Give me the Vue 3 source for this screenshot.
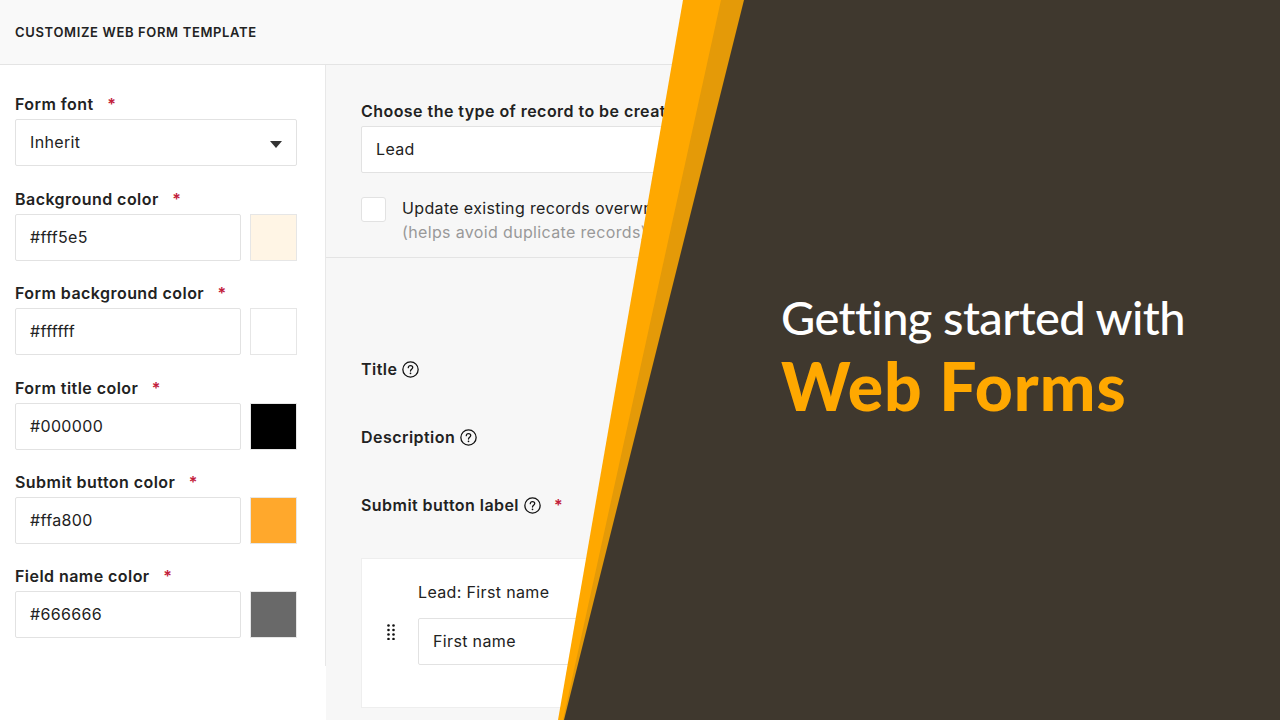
<script setup>
const fields = [
  { label: "Background color", value: "#fff5e5", color: "#fff5e5" },
  { label: "Form background color", value: "#ffffff", color: "#ffffff" },
  { label: "Form title color", value: "#000000", color: "#000000" },
  { label: "Submit button color", value: "#ffa800", color: "#ffa82c" },
  { label: "Field name color", value: "#666666", color: "#696969" },
];
const settings = [
  { label: "Title", required: false },
  { label: "Description", required: false },
  { label: "Submit button label", required: true },
];
</script>

<template>
  <div class="page">
    <header class="topbar">Customize web form template</header>
    <div class="body">
      <aside class="side">
        <div class="side__inner">
          <div class="group">
            <label class="label">Form font <span class="req">*</span></label>
            <div class="input input--select">
              Inherit
              <span class="caret"></span>
            </div>
          </div>
          <div class="group" v-for="field of fields" :key="field.label">
            <label class="label">{{ field.label }} <span class="req">*</span></label>
            <div class="color-row">
              <div class="input">{{ field.value }}</div>
              <div class="swatch" :style="{ background: field.color }"></div>
            </div>
          </div>
        </div>
      </aside>

      <main class="main">
        <section class="record">
          <label class="label">Choose the type of record to be created</label>
          <div class="input">Lead</div>
          <div class="check">
            <span class="check__box"></span>
            <div class="check__text">
              <div>Update existing records overwriting</div>
              <div class="check__hint">(helps avoid duplicate records)</div>
            </div>
          </div>
        </section>

        <section class="settings">
          <div class="settings__list">
            <div class="setting" v-for="item of settings" :key="item.label">
              <span class="label label--inline">{{ item.label }}</span>
              <svg class="help" viewBox="0 0 16 16" width="17" height="17" fill="none" stroke="#111" stroke-width="1.2">
                <circle cx="8" cy="8" r="7.2" />
                <path d="M5.9 6.3c0-1.2.9-2 2.1-2s2.1.8 2.1 1.9c0 1.6-2.1 1.6-2.1 3.3" stroke-linecap="round" />
                <circle cx="8" cy="11.6" r=".8" fill="#111" stroke="none" />
              </svg>
              <span class="req req--setting" v-if="item.required">*</span>
            </div>
          </div>

          <div class="card">
            <svg class="grip" viewBox="0 0 10 16" width="10" height="16" fill="#111">
              <circle cx="2.5" cy="1.5" r="1.3" /><circle cx="7.5" cy="1.5" r="1.3" />
              <circle cx="2.5" cy="6" r="1.3" /><circle cx="7.5" cy="6" r="1.3" />
              <circle cx="2.5" cy="10.5" r="1.3" /><circle cx="7.5" cy="10.5" r="1.3" />
              <circle cx="2.5" cy="15" r="1.3" /><circle cx="7.5" cy="15" r="1.3" />
            </svg>
            <div class="card__field">
              <div class="card__label">Lead: First name</div>
              <div class="input">First name</div>
            </div>
          </div>
        </section>
      </main>
    </div>

    <div class="banner">
      <svg class="banner__shape" viewBox="0 0 1280 720" width="1280" height="720">
        <polygon points="683,0 1280,0 1280,720 558,720" fill="#ffa800" />
        <polygon points="721,0 1280,0 1280,720 563,720" fill="#e49a08" />
        <polygon points="744,0 1280,0 1280,720 564,720" fill="#3f382e" />
      </svg>
      <div class="banner__text">
        <div class="banner__line">Getting started with</div>
        <div class="banner__line banner__line--big">Web Forms</div>
      </div>
    </div>
  </div>
</template>

<style>
html,
body {
  margin: 0;
  background: #fff;
}
</style>

<style scoped>
.page {
  position: relative;
  width: 1280px;
  height: 720px;
  overflow: hidden;
  display: flex;
  flex-direction: column;
  font-family: Inter, "Liberation Sans", sans-serif;
  font-size: 16px;
  letter-spacing: 0.35px;
  color: #222;
  background: #fff;
}

.topbar {
  height: 64px;
  flex: none;
  display: flex;
  align-items: center;
  padding-left: 15px;
  background: #f9f9f9;
  border-bottom: 1px solid #e4e4e4;
  font-size: 13px;
  font-weight: 600;
  letter-spacing: 0.65px;
  text-transform: uppercase;
}

.body {
  flex: 1;
  display: flex;
  min-height: 0;
}

.side {
  width: 326px;
  flex: none;
  background: #fff;
}

.side__inner {
  box-sizing: border-box;
  height: 601px;
  padding: 27.4px 28px 0 15px;
  border-right: 1px solid #e8e8e8;
}

.group {
  height: 94.4px;
}

.label {
  display: block;
  height: 24px;
  line-height: 24px;
  margin-bottom: 3px;
  font-size: 16px;
  font-weight: 600;
  letter-spacing: 0.45px;
  white-space: nowrap;
}

.label--inline {
  display: inline;
  margin: 0;
}

.req {
  color: #c2203a;
  margin-left: 9px;
}

.req--setting {
  margin-left: 8px;
  font-weight: 600;
}

.input {
  position: relative;
  box-sizing: border-box;
  height: 47px;
  line-height: 45px;
  padding-left: 14px;
  background: #fff;
  border: 1px solid #e2e2e2;
  border-radius: 2px;
  white-space: nowrap;
}

.caret {
  position: absolute;
  right: 14px;
  top: 21px;
  border-left: 6px solid transparent;
  border-right: 6px solid transparent;
  border-top: 7px solid #333;
}

.color-row {
  display: flex;
  gap: 9px;
}

.color-row .input {
  flex: 1;
}

.swatch {
  width: 47px;
  height: 47px;
  box-sizing: border-box;
  flex: none;
  border: 1px solid #e6e6e6;
}

.main {
  flex: 1;
  background: #f7f7f7;
  min-width: 0;
}

.record {
  box-sizing: border-box;
  height: 193px;
  padding: 34px 0 0 35px;
  border-bottom: 1px solid #e4e4e4;
}

.record .input {
  width: 500px;
}

.check {
  display: flex;
  gap: 16px;
  margin-top: 24px;
}

.check__box {
  width: 25px;
  height: 25px;
  box-sizing: border-box;
  flex: none;
  background: #fff;
  border: 1px solid #e2e2e2;
  border-radius: 3px;
}

.check__text {
  line-height: 24px;
  margin-top: -1px;
}

.check__hint {
  color: #999;
}

.settings {
  padding: 99px 0 0 35px;
}

.settings__list {
  display: flex;
  flex-direction: column;
  gap: 44px;
}

.setting {
  display: flex;
  align-items: center;
  gap: 5px;
  height: 24px;
}

.help {
  flex: none;
}

.card {
  box-sizing: border-box;
  position: relative;
  width: 500px;
  height: 150px;
  margin-top: 41px;
  padding: 21px 0 0 56px;
  background: #fff;
  border: 1px solid #eee;
}

.card__label {
  height: 24px;
  line-height: 24px;
  margin-bottom: 14px;
}

.grip {
  position: absolute;
  left: 24px;
  top: 65px;
}

.banner {
  position: absolute;
  inset: 0;
  pointer-events: none;
}

.banner__shape {
  position: absolute;
  left: 0;
  top: 0;
}

.banner__text {
  position: absolute;
  left: 781px;
  top: 285px;
  font-family: Lato, sans-serif;
  font-variant-ligatures: none;
}

.banner__line {
  height: 64px;
  line-height: 64px;
  font-size: 47px;
  font-weight: 500;
  letter-spacing: -0.6px;
  color: #fff;
  white-space: nowrap;
}

.banner__line--big {
  height: 74px;
  line-height: 74px;
  font-size: 66px;
  font-weight: 900;
  letter-spacing: 1px;
  color: #ffa800;
}
</style>
